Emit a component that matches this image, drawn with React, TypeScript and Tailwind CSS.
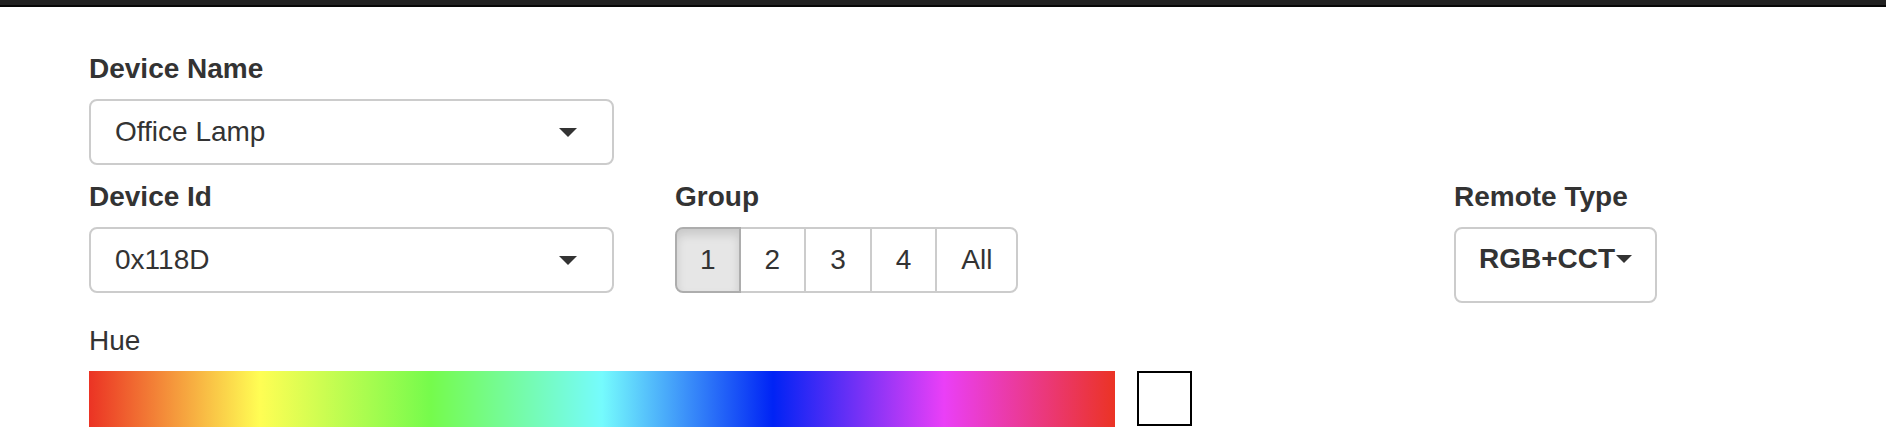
const font = "font-['Liberation_Sans',Arial,sans-serif]"

function Label({ text, weight = "font-bold" }: { text: string; weight?: string }) {
  return <div className={`h-[40px] mb-[10px] text-[28px] leading-[40px] text-[#333] ${weight}`}>{text}</div>
}

function SelectBox({ value }: { value: string }) {
  return (
    <div className="relative flex items-center w-[525px] h-[66px] border-2 border-[#ccc] rounded-[8px] bg-white pl-[24px] text-[28px] text-[#333]">
      <span>{value}</span>
      <svg className="absolute right-[35px] top-[27px]" width="18" height="9" viewBox="0 0 18 9">
        <polygon points="0,0 18,0 9,9" fill="#333" />
      </svg>
    </div>
  )
}

function GroupButtons() {
  const items = ["1", "2", "3", "4", "All"]
  return (
    <div className="flex h-[66px]">
      {items.map((g, i) => {
        const active = i === 0
        const first = i === 0
        const last = i === items.length - 1
        return (
          <div
            key={g}
            className={`flex items-center justify-center h-[66px] px-[24px] border-2 text-[28px] text-[#333] ${
              first ? "rounded-l-[8px] pl-[23px] pr-[23px]" : "-ml-[2px]"
            } ${last ? "rounded-r-[8px]" : ""} ${
              active
                ? "relative z-10 bg-[#e6e6e6] border-[#adadad] shadow-[inset_0_6px_10px_rgba(0,0,0,0.125)]"
                : "bg-white border-[#ccc]"
            }`}
          >
            {g}
          </div>
        )
      })}
    </div>
  )
}

export default function App() {
  return (
    <div className={`${font} bg-white min-h-[434px]`}>
      <div className="h-[7px] bg-[#222] border-b-2 border-[#080808]" />
      <div className="pl-[89px] pt-[42px]">
        <Label text="Device Name" />
        <SelectBox value="Office Lamp" />

        <div className="flex mt-[12px]">
          <div className="w-[586px]">
            <Label text="Device Id" />
            <SelectBox value="0x118D" />
          </div>
          <div className="w-[779px]">
            <Label text="Group" />
            <GroupButtons />
          </div>
          <div>
            <Label text="Remote Type" />
            <div className="flex justify-center w-[203px] h-[76px] border-2 border-[#ccc] rounded-[8px] bg-white pt-[10px]">
              <div className="flex items-center h-[40px] text-[28px] font-bold text-[#333]">
                <span>RGB+CCT</span>
                <svg className="ml-[1px]" width="16" height="8" viewBox="0 0 16 8">
                  <polygon points="0,0 16,0 8,8" fill="#333" />
                </svg>
              </div>
            </div>
          </div>
        </div>

        <div className="mt-[18px]">
          <Label text="Hue" weight="font-normal" />
        </div>
        <div className="flex items-start gap-[22px] mt-[9px]">
          <div className="w-[1026px] h-[56px] bg-[linear-gradient(to_right,#eb3324_0%,#fffe54_16.67%,#75fb4c_33.33%,#75fbfd_50%,#0023f5_66.67%,#ea3ff7_83.33%,#eb3324_100%)]" />
          <div className="w-[55px] h-[55px] border-2 border-black bg-white" />
        </div>
      </div>
    </div>
  )
}
